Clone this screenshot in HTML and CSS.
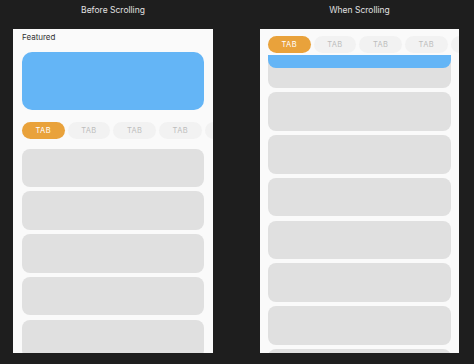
FILE: index.html
```html
<!DOCTYPE html>
<html lang="en">
<head>
    <meta charset="UTF-8">
    <meta name="viewport" content="width=device-width, initial-scale=1.0">
    <title>Sticky Tabs</title>
    <link rel="stylesheet" href="styles.css">
</head>
<body>
    <div class="board">
        <div class="column column-left">
            <div class="caption">Before Scrolling</div>
            <div class="phone">
                <div class="featured-label">Featured</div>
                <div class="banner"></div>
                <div class="tabs tabs-left">
                    <span class="tab active">TAB</span>
                    <span class="tab">TAB</span>
                    <span class="tab">TAB</span>
                    <span class="tab">TAB</span>
                    <span class="tab"></span>
                </div>
                <div class="card-list">
                    <div class="card"></div>
                    <div class="card"></div>
                    <div class="card"></div>
                    <div class="card"></div>
                    <div class="card"></div>
                </div>
            </div>
        </div>

        <div class="column column-right">
            <div class="caption">When Scrolling</div>
            <div class="phone phone-scrolled">
                <div class="tabs tabs-right">
                    <span class="tab active">TAB</span>
                    <span class="tab">TAB</span>
                    <span class="tab">TAB</span>
                    <span class="tab">TAB</span>
                    <span class="tab"></span>
                </div>
                <div class="card-list">
                    <div class="card card-first">
                        <div class="banner-strip"></div>
                    </div>
                    <div class="card"></div>
                    <div class="card"></div>
                    <div class="card"></div>
                    <div class="card"></div>
                    <div class="card"></div>
                    <div class="card"></div>
                    <div class="card"></div>
                </div>
            </div>
        </div>
    </div>
</body>
</html>
```

FILE: styles.css
```css
* {
    box-sizing: border-box;
    margin: 0;
    padding: 0;
}

body {
    font-family: Inter, "Noto Sans", sans-serif;
    background: #1e1e1e;
    height: 364px;
    overflow: hidden;
}

.board {
    display: flex;
    gap: 47px;
    padding-left: 13px;
}

.column-left {
    width: 200px;
}

.column-right {
    width: 199px;
}

.caption {
    height: 29px;
    padding-top: 4px;
    font-size: 8.5px;
    line-height: 12px;
    color: #e0e0e0;
    text-align: center;
}

.phone {
    height: 324px;
    background: #fafafa;
    overflow: hidden;
    padding: 2px 9px 0;
}

.phone-scrolled {
    padding: 7px 8px 0;
}

.featured-label {
    font-size: 8px;
    line-height: 12px;
    color: #333;
}

.banner {
    margin-top: 9px;
    height: 58px;
    background: #64b5f6;
    border-radius: 10px;
}

.tabs {
    display: flex;
    gap: 3.2px;
    margin-right: -9px;
}

.tabs-left {
    margin-top: 11.5px;
}

.tab {
    flex: none;
    width: 42.5px;
    height: 17px;
    border-radius: 9px;
    background: #f2f2f2;
    color: #bdbdbd;
    font-size: 7.5px;
    line-height: 17px;
    letter-spacing: 0.4px;
    text-align: center;
}

.tab.active {
    background: #e9a23b;
    color: #fff;
}

.card-list {
    display: flex;
    flex-direction: column;
    gap: 4.3px;
    margin-top: 10px;
}

.phone-scrolled .card-list {
    margin-top: 2px;
}

.card {
    flex: none;
    height: 38.5px;
    background: #e0e0e0;
    border-radius: 8px;
}

.card-first {
    height: 33px;
    border-radius: 0 0 8px 8px;
    overflow: hidden;
}

.banner-strip {
    height: 13px;
    background: #64b5f6;
    border-radius: 0 0 8px 8px;
}
```
